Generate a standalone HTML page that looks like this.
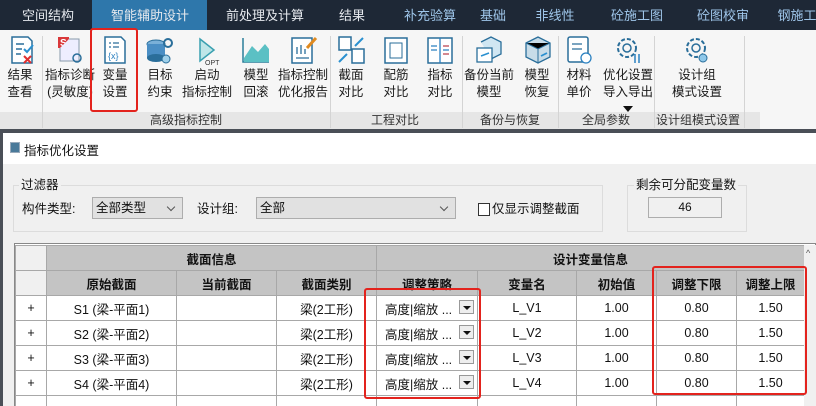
<!DOCTYPE html>
<html><head><meta charset="utf-8"><style>
*{margin:0;padding:0;box-sizing:border-box}
html,body{width:816px;height:406px;overflow:hidden}
body{background:#f0f0f0;font-family:"Liberation Sans","Noto Sans CJK SC",sans-serif;font-size:12px;color:#111;position:relative}
.a{position:absolute}
.tabs{left:0;top:0;width:816px;height:30px;background:#1e2836}
.tab{position:absolute;top:0;height:30px;line-height:32px;color:#e6e9ee;font-size:13px;transform:translateX(-50%);white-space:nowrap}
.rib{left:0;top:30px;width:816px;height:100px;background:#f6f6f6}
.band{left:0;top:112px;width:760px;height:17px;background:#e6e6e6}
.btn{position:absolute;top:67px;transform:translateX(-50%);text-align:center;font-size:12.5px;line-height:17px;white-space:nowrap;color:#1a1a1a}
.ico{position:absolute;top:34px;width:32px;height:32px;transform:translateX(-50%)}
.sep{position:absolute;top:36px;width:1px;height:92px;background:#d4d4d4}
.gl{position:absolute;top:112px;line-height:17px;transform:translateX(-50%);font-size:12px;color:#333}
.red{position:absolute;border:2.5px solid #e3231d;border-radius:3px}
table{border-collapse:collapse;table-layout:fixed;position:absolute;left:15px;top:245px}
td{border:1px solid #a8a8a8;height:25px;text-align:center;font-size:12.5px;background:#fff;white-space:nowrap;overflow:hidden}
td.h{background:#c4c4c4;font-weight:bold;height:25px}
td.rh{background:#f0f0f0}
.dd{position:relative;text-align:left;padding-left:8px}
.dd i{position:absolute;right:3px;top:4px;width:15px;height:14px;border:1px solid #999;background:#eee;font-style:normal}
.dd i:after{content:"";position:absolute;left:3px;top:5px;border-left:4px solid transparent;border-right:4px solid transparent;border-top:4px solid #111}
.combo{position:absolute;height:22px;border:1px solid #adadad;background:#e1e1e1;line-height:20px;padding-left:3px;font-size:12.5px}
.combo:after{content:"";position:absolute;right:8px;top:6px;width:5px;height:5px;border-right:1px solid #555;border-bottom:1px solid #555;transform:rotate(45deg)}
.grp{position:absolute;border:1px solid #dcdcdc}
.lbl{position:absolute;font-size:12.5px;line-height:16px;background:#f0f0f0;white-space:nowrap}
</style></head><body>
<div class="a tabs"></div>
<div class="a" style="left:92px;top:0;width:115px;height:30px;background:#2e77ab"></div>
<div class="tab" style="left:48px">空间结构</div>
<div class="tab" style="left:150px">智能辅助设计</div>
<div class="tab" style="left:265px">前处理及计算</div>
<div class="tab" style="left:352px">结果</div>
<div class="tab" style="left:430px;color:#9fc6ea">补充验算</div>
<div class="tab" style="left:493px;color:#9fc6ea">基础</div>
<div class="tab" style="left:555px;color:#9fc6ea">非线性</div>
<div class="tab" style="left:637px;color:#9fc6ea">砼施工图</div>
<div class="tab" style="left:723px;color:#9fc6ea">砼图校审</div>
<div class="tab" style="left:797px;color:#9fc6ea">钢施工</div>
<div class="a rib"></div>
<div class="a band"></div>
<div class="sep" style="left:42px"></div><div class="sep" style="left:330px"></div><div class="sep" style="left:462px"></div><div class="sep" style="left:558px"></div><div class="sep" style="left:654px"></div><div class="sep" style="left:744px"></div>
<div class="gl" style="left:186px">高级指标控制</div>
<div class="gl" style="left:395px">工程对比</div>
<div class="gl" style="left:510px">备份与恢复</div>
<div class="gl" style="left:606px">全局参数</div>
<div class="gl" style="left:698px">设计组模式设置</div>

<svg class="ico" style="left:22px" viewBox="0 0 32 32"><path d="M6 3h16l4 4v22H6z" fill="#fff" stroke="#2a6e9a" stroke-width="1.5"/><path d="M10 10h8M10 15h6M10 20h5" stroke="#2a6e9a" stroke-width="1.5"/><path d="M18 15l3 3 6-7" stroke="#2a90d0" stroke-width="2" fill="none"/><path d="M18 22l7 7M25 22l-7 7" stroke="#e03030" stroke-width="2"/></svg>
<svg class="ico" style="left:70px" viewBox="0 0 32 32"><rect x="4" y="3" width="11" height="11" fill="#d9383a"/><text x="6" y="12" font-size="10" fill="#fff" font-weight="bold" font-family="Liberation Sans">S</text><path d="M15 5h10v22H6V14" fill="#eef" stroke="#8899aa"/><circle cx="23" cy="24" r="4" fill="none" stroke="#2a6e9a" stroke-width="1.5"/></svg>
<svg class="ico" style="left:115px" viewBox="0 0 32 32"><path d="M6 3h16l4 4v22H6z" fill="#fff" stroke="#2a6e9a" stroke-width="1.5"/><path d="M10 9h2M14 9h6M10 13h2M14 13h6" stroke="#2a6e9a" stroke-width="1.3"/><text x="9" y="25" font-size="9" fill="#2a80c0" font-family="Liberation Sans">{x}</text></svg>
<svg class="ico" style="left:160px" viewBox="0 0 32 32"><ellipse cx="12" cy="10" rx="9" ry="4" fill="#7ab0d8" stroke="#2a6e9a"/><rect x="3" y="10" width="18" height="14" fill="#4a8ec4"/><ellipse cx="12" cy="24" rx="9" ry="4" fill="#2a6e9a"/><circle cx="24" cy="9" r="4" fill="none" stroke="#2a6e9a" stroke-width="2"/><circle cx="22" cy="25" r="4" fill="#9fd0ea" stroke="#2a6e9a"/></svg>
<svg class="ico" style="left:207px" viewBox="0 0 32 32"><path d="M9 5l14 11-14 11z" fill="#bfe6e8" stroke="#3aa0b0" stroke-width="1.5"/><text x="14" y="31" font-size="7" fill="#333" font-family="Liberation Sans">OPT</text></svg>
<svg class="ico" style="left:256px" viewBox="0 0 32 32"><path d="M3 4v24h26" stroke="#2a7e9a" stroke-width="1.5" fill="none"/><path d="M4 24l8-12 6 6 7-8 4 5v13H4z" fill="#5bc0c4"/></svg>
<svg class="ico" style="left:303px" viewBox="0 0 32 32"><rect x="5" y="4" width="20" height="25" fill="#fff" stroke="#2a6e9a" stroke-width="1.5"/><path d="M10 20v-7M14 20v-9M18 20v-5M9 24h13" stroke="#2a6e9a" stroke-width="1.3"/><path d="M20 14l9-10" stroke="#e08a20" stroke-width="3"/></svg>
<svg class="ico" style="left:351px" viewBox="0 0 32 32"><rect x="4" y="3" width="12" height="13" fill="#fff" stroke="#2a6e9a" stroke-width="1.5"/><rect x="17" y="15" width="12" height="14" fill="#fff" stroke="#2a6e9a" stroke-width="1.5"/><path d="M28 4l-8 8M4 28l8-8" stroke="#2a90d0" stroke-width="2"/></svg>
<svg class="ico" style="left:396px" viewBox="0 0 32 32"><rect x="5" y="4" width="22" height="25" fill="#fff" stroke="#2a6e9a" stroke-width="1.5"/><rect x="10" y="9" width="12" height="15" fill="none" stroke="#2a6e9a"/></svg>
<svg class="ico" style="left:440px" viewBox="0 0 32 32"><rect x="4" y="4" width="24" height="25" fill="#fff" stroke="#2a6e9a" stroke-width="1.5"/><path d="M16 4v25M7 12h6M7 16h6M19 12h6M19 16h6M19 20h6" stroke="#2a80c0" stroke-width="1.3"/><path d="M19 12h6M19 20h6" stroke="#e03030"/></svg>
<svg class="ico" style="left:489px" viewBox="0 0 32 32"><path d="M8 8l10-5 10 5v12l-10 5" fill="#d0e6f2" stroke="#2a6e9a" stroke-width="1.3"/><rect x="4" y="14" width="15" height="14" fill="#fff" stroke="#2a6e9a" stroke-width="1.3"/><path d="M8 22l8-3" stroke="#2a90d0" stroke-width="1.5"/></svg>
<svg class="ico" style="left:537px" viewBox="0 0 32 32"><path d="M5 9l12-6 12 6v14l-12 6-12-6z" fill="#c8dce8" stroke="#2a6e9a" stroke-width="1.3"/><path d="M17 15v14M5 9l12 6 12-6" stroke="#2a6e9a"/><path d="M20 22l6-3" stroke="#2a90d0" stroke-width="1.8"/></svg>
<svg class="ico" style="left:579px" viewBox="0 0 32 32"><rect x="5" y="3" width="20" height="25" rx="2" fill="#fff" stroke="#2a6e9a" stroke-width="1.5"/><path d="M9 10h10M9 15h10" stroke="#2a6e9a" stroke-width="1.3"/><circle cx="23" cy="24" r="5" fill="#fff" stroke="#2a80c0" stroke-width="1.3"/></svg>
<svg class="ico" style="left:628px" viewBox="0 0 32 32"><circle cx="15" cy="14" r="9" fill="none" stroke="#2a6e9a" stroke-width="2" stroke-dasharray="4 2"/><circle cx="15" cy="14" r="4" fill="none" stroke="#2a6e9a" stroke-width="1.5"/><path d="M23 20v9M27 20v9" stroke="#2a80c0" stroke-width="1.5"/></svg>
<svg class="ico" style="left:697px" viewBox="0 0 32 32"><circle cx="15" cy="14" r="9" fill="none" stroke="#2a6e9a" stroke-width="2" stroke-dasharray="4 2"/><circle cx="15" cy="14" r="4" fill="none" stroke="#2a6e9a" stroke-width="1.5"/><circle cx="22" cy="24" r="4" fill="#8fc8ea" stroke="#2a6e9a"/></svg>

<div class="btn" style="left:20px">结果<br>查看</div>
<div class="btn" style="left:70px">指标诊断<br>(灵敏度)</div>
<div class="btn" style="left:115px">变量<br>设置</div>
<div class="btn" style="left:160px">目标<br>约束</div>
<div class="btn" style="left:207px">启动<br>指标控制</div>
<div class="btn" style="left:256px">模型<br>回滚</div>
<div class="btn" style="left:303px">指标控制<br>优化报告</div>
<div class="btn" style="left:351px">截面<br>对比</div>
<div class="btn" style="left:396px">配筋<br>对比</div>
<div class="btn" style="left:440px">指标<br>对比</div>
<div class="btn" style="left:489px">备份当前<br>模型</div>
<div class="btn" style="left:537px">模型<br>恢复</div>
<div class="btn" style="left:579px">材料<br>单价</div>
<div class="btn" style="left:628px">优化设置<br>导入导出</div>
<div class="a" style="left:623px;top:106px;border-left:5px solid transparent;border-right:5px solid transparent;border-top:6px solid #111"></div>
<div class="btn" style="left:697px">设计组<br>模式设置</div>
<div class="red" style="left:90px;top:28px;width:48px;height:84px"></div>

<div class="a" style="left:0;top:129px;width:816px;height:4px;background:#4a4f57"></div>
<div class="a" style="left:0;top:133px;width:3px;height:273px;background:#4a4f57"></div>
<div class="a" style="left:3px;top:133px;width:813px;height:31px;background:#fff"></div>
<div class="a" style="left:10px;top:142px;width:10px;height:11px;background:#4a7a9a;border:1px solid #9ab"></div>
<div class="a" style="left:24px;top:140px;font-size:12.5px">指标优化设置</div>

<div class="grp" style="left:13px;top:185px;width:590px;height:47px"></div>
<div class="lbl" style="left:19px;top:177px;padding:0 2px">过滤器</div>
<div class="lbl" style="left:22px;top:201px">构件类型:</div>
<div class="combo" style="left:92px;top:197px;width:91px">全部类型</div>
<div class="lbl" style="left:197px;top:201px">设计组:</div>
<div class="combo" style="left:256px;top:197px;width:200px">全部</div>
<div class="a" style="left:478px;top:203px;width:12px;height:13px;border:1px solid #333;background:#fff"></div>
<div class="lbl" style="left:492px;top:201px">仅显示调整截面</div>
<div class="grp" style="left:627px;top:185px;width:120px;height:47px"></div>
<div class="lbl" style="left:634px;top:177px;padding:0 2px">剩余可分配变量数</div>
<div class="a" style="left:648px;top:197px;width:74px;height:21px;border:1px solid #adadad;background:#f0f0f0;text-align:center;line-height:19px">46</div>

<div class="a" style="left:14px;top:243px;width:802px;height:163px;border:1px solid #888;background:#fff"></div>
<table>
<colgroup><col style="width:31px"><col style="width:130px"><col style="width:100px"><col style="width:100px"><col style="width:101px"><col style="width:99px"><col style="width:80px"><col style="width:80px"><col style="width:68px"></colgroup>
<tr><td class="rh"></td><td class="h" colspan="3">截面信息</td><td class="h" colspan="5">设计变量信息</td></tr>
<tr><td class="rh"></td><td class="h">原始截面</td><td class="h">当前截面</td><td class="h">截面类别</td><td class="h">调整策略</td><td class="h">变量名</td><td class="h">初始值</td><td class="h">调整下限</td><td class="h">调整上限</td></tr>
<tr><td>+</td><td>S1 (梁-平面1)</td><td></td><td>梁(2工形)</td><td class="dd">高度|缩放 ...<i></i></td><td>L_V1</td><td>1.00</td><td>0.80</td><td>1.50</td></tr>
<tr><td>+</td><td>S2 (梁-平面2)</td><td></td><td>梁(2工形)</td><td class="dd">高度|缩放 ...<i></i></td><td>L_V2</td><td>1.00</td><td>0.80</td><td>1.50</td></tr>
<tr><td>+</td><td>S3 (梁-平面3)</td><td></td><td>梁(2工形)</td><td class="dd">高度|缩放 ...<i></i></td><td>L_V3</td><td>1.00</td><td>0.80</td><td>1.50</td></tr>
<tr><td>+</td><td>S4 (梁-平面4)</td><td></td><td>梁(2工形)</td><td class="dd">高度|缩放 ...<i></i></td><td>L_V4</td><td>1.00</td><td>0.80</td><td>1.50</td></tr>
<tr><td></td><td></td><td></td><td></td><td></td><td></td><td></td><td></td><td></td></tr>
</table>
<div class="a" style="left:804px;top:245px;width:12px;height:161px;background:#f0f0f0"></div>
<div class="a" style="left:806px;top:248px;font-size:9px;color:#555">^</div>
<div class="red" style="left:364px;top:288px;width:117px;height:111px"></div>
<div class="red" style="left:652px;top:266px;width:155px;height:129px"></div>
</body></html>
